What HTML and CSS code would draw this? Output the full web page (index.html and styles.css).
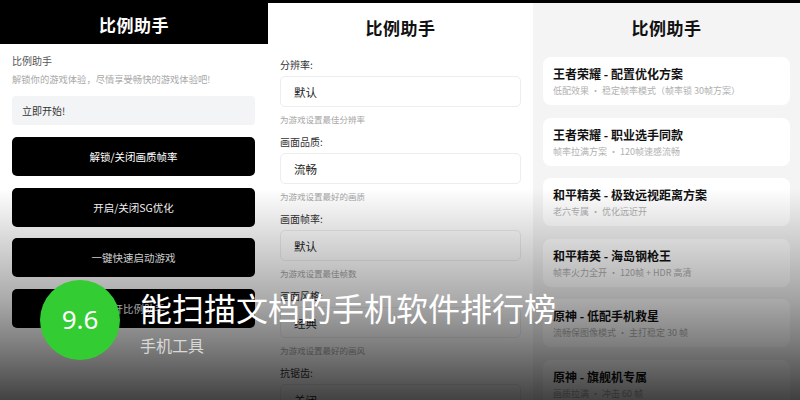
FILE: index.html
```html
<!DOCTYPE html>
<html lang="zh-CN">
<head>
<meta charset="utf-8">
<title>能扫描文档的手机软件排行榜</title>
<link rel="stylesheet" href="styles.css">
</head>
<body>
<div class="stage">
  <div class="shots">
    <!-- 主页：按钮列表 -->
    <section class="phone phone-home">
      <header class="bar bar-dark">比例助手</header>
      <div class="home-body">
        <p class="home-name">比例助手</p>
        <p class="home-desc">解锁你的游戏体验，尽情享受畅快的游戏体验吧!</p>
        <div class="home-start">立即开始!</div>
        <div class="btn-list">
          <div class="btn">解锁/关闭画质帧率</div>
          <div class="btn">开启/关闭SG优化</div>
          <div class="btn">一键快速启动游戏</div>
          <div class="btn">打开比例助手</div>
        </div>
      </div>
    </section>

    <!-- 设置页：表单 -->
    <section class="phone phone-form">
      <header class="bar">比例助手</header>
      <div class="form-body">
        <div class="field">
          <label class="field-label">分辨率:</label>
          <div class="field-input">默认</div>
          <p class="field-hint">为游戏设置最佳分辨率</p>
        </div>
        <div class="field">
          <label class="field-label">画面品质:</label>
          <div class="field-input">流畅</div>
          <p class="field-hint">为游戏设置最好的画质</p>
        </div>
        <div class="field">
          <label class="field-label">画面帧率:</label>
          <div class="field-input">默认</div>
          <p class="field-hint">为游戏设置最佳帧数</p>
        </div>
        <div class="field">
          <label class="field-label">画面风格:</label>
          <div class="field-input">经典</div>
          <p class="field-hint">为游戏设置最好的画风</p>
        </div>
        <div class="field">
          <label class="field-label">抗锯齿:</label>
          <div class="field-input">关闭</div>
          <p class="field-hint">为游戏设置抗锯齿</p>
        </div>
      </div>
    </section>

    <!-- 方案页：卡片列表 -->
    <section class="phone phone-plans">
      <header class="bar">比例助手</header>
      <div class="plan-list">
        <div class="plan">
          <h3 class="plan-title">王者荣耀 - 配置优化方案</h3>
          <p class="plan-sub">低配效果 · 稳定帧率模式（帧率锁 30帧方案）</p>
        </div>
        <div class="plan">
          <h3 class="plan-title">王者荣耀 - 职业选手同款</h3>
          <p class="plan-sub">帧率拉满方案 · 120帧速感流畅</p>
        </div>
        <div class="plan">
          <h3 class="plan-title">和平精英 - 极致远视距离方案</h3>
          <p class="plan-sub">老六专属 · 优化远近开</p>
        </div>
        <div class="plan">
          <h3 class="plan-title">和平精英 - 海岛钢枪王</h3>
          <p class="plan-sub">帧率火力全开 · 120帧 + HDR 高清</p>
        </div>
        <div class="plan">
          <h3 class="plan-title">原神 - 低配手机救星</h3>
          <p class="plan-sub">流畅保图像模式 · 主打稳定 30 帧</p>
        </div>
        <div class="plan">
          <h3 class="plan-title">原神 - 旗舰机专属</h3>
          <p class="plan-sub">画质拉满 · 冲击 60 帧</p>
        </div>
      </div>
    </section>
  </div>

  <!-- 底部渐暗遮罩与评分信息 -->
  <div class="shade"></div>
  <div class="info">
    <div class="score">9.6</div>
    <div class="info-text">
      <h1 class="info-title">能扫描文档的手机软件排行榜</h1>
      <p class="info-cat">手机工具</p>
    </div>
  </div>
</div>
</body>
</html>
```

FILE: styles.css
```css
* {
  box-sizing: border-box;
  margin: 0;
  padding: 0;
}

html, body {
  width: 800px;
  height: 400px;
  overflow: hidden;
  background: #fff;
}

body {
  font-family: "Noto Sans CJK SC", "Noto Sans", sans-serif;
  color: #222;
}

.stage {
  position: relative;
  width: 800px;
  height: 400px;
  overflow: hidden;
}

.shots {
  display: flex;
  height: 400px;
}

.phone {
  height: 400px;
  overflow: hidden;
  display: flex;
  flex-direction: column;
}

/* ---------- shared title bar ---------- */
.bar {
  height: 48px;
  flex: none;
  display: flex;
  align-items: center;
  justify-content: center;
  font-size: 17px;
  font-weight: 700;
  color: #111;
  letter-spacing: 0.5px;
}

.bar-dark {
  height: 44px;
  background: #000;
  color: #fff;
  padding-top: 5px;
}

/* ---------- home screen ---------- */
.phone-home {
  width: 268px;
  background: #fff;
}

.home-body {
  padding: 10px 12px 0 12px;
}

.home-name {
  font-size: 10px;
  line-height: 14px;
  color: #555;
}

.home-desc {
  margin-top: 5px;
  font-size: 9.3px;
  line-height: 13px;
  color: #a8a8a8;
}

.home-start {
  margin-top: 10px;
  width: 243px;
  height: 29px;
  display: flex;
  align-items: center;
  padding-left: 10px;
  background: #f3f4f6;
  border-radius: 4px;
  font-size: 10px;
  color: #333;
}

.btn-list {
  margin-top: 12px;
  display: flex;
  flex-direction: column;
  gap: 11.7px;
}

.btn {
  width: 243px;
  height: 39px;
  display: flex;
  align-items: center;
  justify-content: center;
  background: #000;
  border-radius: 5px;
  color: #fff;
  font-size: 10.5px;
}

/* ---------- settings form ---------- */
.phone-form {
  width: 265px;
  background: #fff;
  border-top: 3px solid #000;
}

.form-body {
  padding: 7px 12px 0 12px;
  display: flex;
  flex-direction: column;
  gap: 10px;
}

.field-label {
  display: block;
  font-size: 10px;
  line-height: 14px;
  color: #333;
}

.field-input {
  margin-top: 4px;
  width: 241px;
  height: 31px;
  display: flex;
  align-items: center;
  padding-left: 13px;
  border: 1px solid #ededed;
  border-radius: 5px;
  background: #fff;
  font-size: 11.5px;
  color: #222;
}

.field-hint {
  margin-top: 6px;
  font-size: 8.5px;
  line-height: 12px;
  color: #a5a5a5;
}

/* ---------- plan cards ---------- */
.phone-plans {
  width: 267px;
  background: #f4f4f5;
  border-top: 3px solid #000;
}

.plan-list {
  padding: 6px 10px 0 10px;
  display: flex;
  flex-direction: column;
  gap: 12.5px;
}

.plan {
  height: 48px;
  flex: none;
  padding: 9px 10px 0 10px;
  background: #fff;
  border-radius: 8px;
}

.plan-title {
  font-size: 12px;
  line-height: 16px;
  font-weight: 700;
  color: #111;
}

.plan-sub {
  margin-top: 3px;
  font-size: 9px;
  line-height: 12px;
  color: #b0b0b0;
}

/* ---------- bottom shade + rating ---------- */
.shade {
  position: absolute;
  inset: 0;
  background: linear-gradient(
    to bottom,
    rgba(0, 0, 0, 0) 47%,
    rgba(0, 0, 0, 0.32) 74%,
    rgba(0, 0, 0, 0.5) 86%,
    rgba(0, 0, 0, 0.74) 100%
  );
  pointer-events: none;
}

.info {
  position: absolute;
  left: 40px;
  top: 280px;
  display: flex;
  align-items: flex-start;
  gap: 20px;
}

.score {
  width: 80px;
  height: 80px;
  flex: none;
  border-radius: 50%;
  background: #33cc33;
  color: #fff;
  display: flex;
  align-items: center;
  justify-content: center;
  font-family: "Noto Sans", "Open Sans", sans-serif;
  font-size: 26px;
  padding-bottom: 2px;
}

.info-text {
  padding-top: 8px;
}

.info-title {
  font-size: 32px;
  line-height: 38px;
  font-weight: 400;
  color: #fff;
  white-space: nowrap;
}

.info-cat {
  margin-top: 8px;
  font-size: 16px;
  line-height: 22px;
  color: #d8d8d8;
}
```
